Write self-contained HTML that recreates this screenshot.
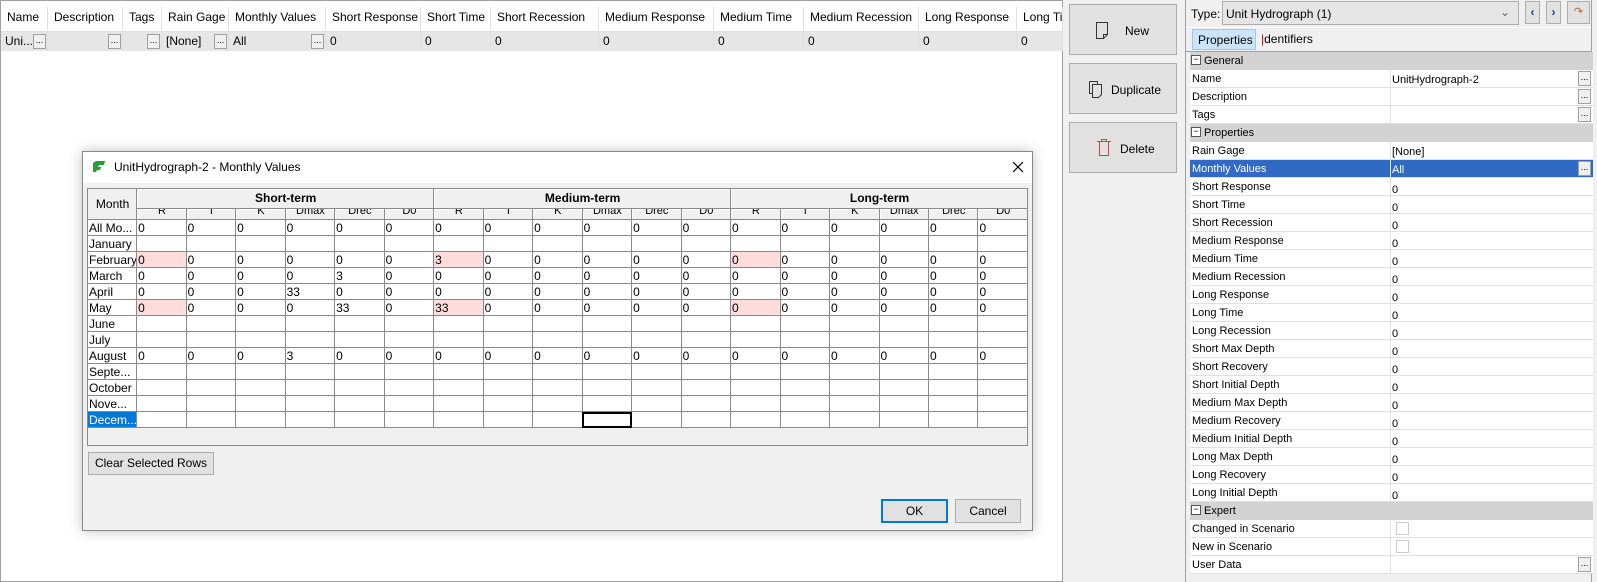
<!DOCTYPE html>
<html><head><meta charset="utf-8">
<style>
*{box-sizing:border-box;margin:0;padding:0}
body{width:1597px;height:582px;overflow:hidden;background:#f0f0f0;font-family:"Liberation Sans",sans-serif;font-size:12px;color:#000;position:relative}
.abs{position:absolute}
.lg{left:0;top:0;width:1063px;height:582px;background:#fff;border:1px solid #a0a0a0}
.lg .c{position:absolute;white-space:nowrap;overflow:hidden;padding-left:6px;line-height:20px}
.eb{position:absolute;width:13px;height:15px;border:1px solid #a0a0a0;background:#f0f0f0;font-size:9px;line-height:11px;text-align:center}
.btn{position:absolute;background:#e1e1e1;border:1px solid #adadad}
.mb{left:1069px;width:108px;font-size:12px}
.mb span{position:absolute;top:19px}
.pg .r{position:absolute;left:1190px;width:403px;height:18px;border-bottom:1px solid #e0e0e0;background:#fff;font-size:11px}
.pg .l{position:absolute;left:2px;top:3px}
.pg .v{position:absolute;left:202px;top:4px}
.pg .vl{position:absolute;left:200px;top:0;width:1px;height:18px;background:#e0e0e0}
.pg .h{background:#d3d3d3;border-bottom:none}
.mv td{border:1px solid #8a8a8a;height:16px;padding:0 0 0 1px;font-size:12px;line-height:14px;white-space:nowrap;overflow:hidden}
</style></head><body>

<div class="abs lg">
  <div class="abs" style="left:0;top:30px;width:1061px;height:20px;background:#e6e6e6"></div>
  <div id="lgh"></div>
</div>

<div class="btn mb" style="top:4px;height:51px">
 <svg class="abs" style="left:25px;top:17px" width="14" height="17"><path d="M1.5 .5h11v12l-4 4h-7z M12.5 12.5h-4v4" fill="none" stroke="#333"/></svg><span style="left:55px">New</span></div>
<div class="btn mb" style="top:63px;height:51px">
 <svg class="abs" style="left:18px;top:17px" width="16" height="18"><path d="M1.5 .5h8v3 M1.5 .5v12h3" fill="none" stroke="#333"/><path d="M4.5 3.5h9v10l-3 3h-6z" fill="none" stroke="#333"/></svg><span style="left:41px">Duplicate</span></div>
<div class="btn mb" style="top:122px;height:51px">
 <svg class="abs" style="left:26px;top:15px" width="16" height="19"><path d="M1 3.5h14 M5.5 3.5v-2h5v2 M3.5 3.5v14h9v-14" fill="none" stroke="#d0404a"/></svg><span style="left:50px">Delete</span></div>

<div class="abs" style="left:1185px;top:0;width:1px;height:582px;background:#a0a0a0"></div>
<div class="abs" style="left:1591px;top:0;width:1px;height:582px;background:#a0a0a0"></div>
<div class="abs" style="left:1191px;top:7px">Type:</div>
<div class="abs" style="left:1222px;top:1px;width:297px;height:24px;background:#e5e5e5;border:1px solid #adadad;padding:5px 0 0 3px;font-size:12px">Unit Hydrograph (1)<span class="abs" style="right:8px;top:3px;color:#666">&#8964;</span></div>
<div class="btn" style="left:1525px;top:1px;width:15px;height:23px;text-align:center;line-height:21px;color:#1a3a8a;font-weight:bold">&#8249;</div>
<div class="btn" style="left:1546px;top:1px;width:15px;height:23px;text-align:center;line-height:21px;color:#1a3a8a;font-weight:bold">&#8250;</div>
<div class="btn" style="left:1567px;top:1px;width:23px;height:23px;text-align:center;line-height:21px;color:#c06020;font-size:11px">&#8631;</div>
<div class="abs" style="left:1186px;top:27px;width:405px;height:1px;background:#fff"></div>
<div class="abs" style="left:1192px;top:29px;width:64px;height:21px;background:#cce4f7;border:1px solid #99c9ef;padding:3px 0 0 5px">Properties</div>
<div class="abs" style="left:1261px;top:32px"><span style="color:#c00">|</span>dentifiers</div>
<div class="abs" style="left:1186px;top:51px;width:406px;height:1px;background:#a0a0a0"></div>
<div class="pg" id="pg"></div>

<div class="abs" style="left:82px;top:151px;width:951px;height:380px;background:#f0f0f0;border:1px solid #888;box-shadow:0 0 12px rgba(0,0,0,.25)">
  <div class="abs" style="left:0;top:0;width:949px;height:31px;background:#fff"></div>
  <svg class="abs" style="left:9px;top:8px" width="14" height="12"><path d="M1 3l3-2h9l-1 4h-5l-1 2h3l-1 3h-3l-1 2h-3z" fill="#2a9a3a"/></svg>
  <div class="abs" style="left:31px;top:8px;font-size:12px">UnitHydrograph-2 - Monthly Values</div>
  <svg class="abs" style="left:929px;top:9px" width="12" height="12"><path d="M1 1l10 10M11 1l-10 10" stroke="#000" stroke-width="1.2"/></svg>
  <div class="abs" style="left:4px;top:36px;width:941px;height:258px;border:1px solid #8a8a8a;background:#f0f0f0"></div>
  <div id="mvw" class="abs" style="left:4px;top:36px"></div>
  <div class="btn" style="left:5px;top:300px;width:126px;height:23px;text-align:center;line-height:21px">Clear Selected Rows</div>
  <div class="btn" style="left:798px;top:347px;width:67px;height:24px;border:2px solid #0078d7;text-align:center;line-height:20px">OK</div>
  <div class="btn" style="left:872px;top:347px;width:66px;height:24px;text-align:center;line-height:22px">Cancel</div>
</div>

<script>
var cols=[["Name",0,47],["Description",47,122],["Tags",122,161],["Rain Gage",161,228],["Monthly Values",228,325],["Short Response",325,420],["Short Time",420,490],["Short Recession",490,598],["Medium Response",598,713],["Medium Time",713,803],["Medium Recession",803,918],["Long Response",918,1016],["Long Ti",1016,1062]];
var vals=["Uni...","","","[None]","All","0","0","0","0","0","0","0","0"];
var h="";
cols.forEach(function(c,i){
 h+='<div class="c" style="left:'+c[1]+'px;top:6px;width:'+(c[2]-c[1])+'px">'+c[0]+'</div>';
 h+='<div class="abs" style="left:'+(c[2]-1)+'px;top:6px;width:1px;height:44px;background:#e0e0e0"></div>';
 h+='<div class="c" style="left:'+c[1]+'px;top:30px;width:'+(c[2]-c[1])+'px;padding-left:4px">'+vals[i]+'</div>';
 if(i<5) h+='<div class="eb" style="left:'+(c[2]-15)+'px;top:33px">...</div>';
});
h+='<div class="abs" style="left:0;top:30px;width:1062px;height:1px;background:#e0e0e0"></div>';
document.getElementById('lgh').innerHTML=h;
var rows=[["General",1],["Name","UnitHydrograph-2",2],["Description","",2],["Tags","",2],["Properties",1],["Rain Gage","[None]"],["Monthly Values","All",3],["Short Response","0"],["Short Time","0"],["Short Recession","0"],["Medium Response","0"],["Medium Time","0"],["Medium Recession","0"],["Long Response","0"],["Long Time","0"],["Long Recession","0"],["Short Max Depth","0"],["Short Recovery","0"],["Short Initial Depth","0"],["Medium Max Depth","0"],["Medium Recovery","0"],["Medium Initial Depth","0"],["Long Max Depth","0"],["Long Recovery","0"],["Long Initial Depth","0"],["Expert",1],["Changed in Scenario","",4],["New in Scenario","",4],["User Data","",2]];
var p="";
rows.forEach(function(r,i){
 var t=52+i*18;
 if(r[1]===1){p+='<div class="r h" style="top:'+t+'px"><span class="abs" style="left:1px;top:3px;width:10px;height:10px;border:1px solid #555;background:#fff;font-size:9px;line-height:7px;text-align:center">&minus;</span><span class="l" style="left:14px">'+r[0]+'</span></div>';return;}
 var sel=r[2]===3;
 p+='<div class="r" style="top:'+t+'px;'+(sel?'background:#316ac5;color:#fff':'')+'"><span class="l">'+r[0]+'</span><span class="vl"></span><span class="v"'+(r[1]=="0"?' style="top:6px"':'')+'>'+r[1]+'</span>';
 if(r[2]==2||r[2]==3)p+='<span class="eb" style="left:388px;top:1px;color:#000">...</span>';
 if(r[2]==4)p+='<span class="abs" style="left:206px;top:2px;width:13px;height:13px;border:1px solid #ccc;background:#fff"></span>';
 p+='</div>';
});
document.getElementById('pg').innerHTML=p;
var W=[49]; for(var k=0;k<18;k++)W.push(49.3);
var t='<table class="mv" style="border-collapse:collapse;table-layout:fixed;width:941px;background:#fff"><colgroup>';
W.forEach(function(w){t+='<col style="width:'+w+'px">'});
t+='</colgroup><tr><td rowspan="2" style="background:#f0f0f0;text-align:center;height:31px;border-color:#8a8a8a">Month</td>';
["Short-term","Medium-term","Long-term"].forEach(function(s){t+='<td colspan="6" style="background:#f0f0f0;text-align:center;font-weight:bold;height:19px;border:1px solid #8a8a8a;box-shadow:inset 1px 1px #fff">'+s+'</td>'});
t+='</tr><tr>';
for(var g=0;g<3;g++)["R","I","K","Dmax","Drec","D0"].forEach(function(s){t+='<td style="background:#f0f0f0;text-align:center;height:11px;font-size:11px;line-height:11px;overflow:hidden;vertical-align:top;box-shadow:inset 1px 1px #fff"><div style="margin-top:-3px">'+s+'</div></td>'});
t+='</tr>';
var M=["All Mo...","January","February","March","April","May","June","July","August","Septe...","October","Nove...","Decem..."];
var Z=["0","0","0","0","0","0"],E=null;
var data=[[Z,Z,Z],E,[["0p","0","0","0","0","0"],["3p","0","0","0","0","0"],["0p","0","0","0","0","0"]],[["0","0","0","0","3","0"],Z,Z],[["0","0","0","33","0","0"],Z,Z],[["0p","0","0","0","33","0"],["33p","0","0","0","0","0"],["0p","0","0","0","0","0"]],E,E,[["0","0","0","3","0","0"],Z,Z],E,E,E,E];
M.forEach(function(m,i){
 t+='<tr><td style="'+(i==12?'background:#0078d7;color:#fff':'')+'">'+m+'</td>';
 for(var g=0;g<3;g++)for(var c=0;c<6;c++){
  var v=data[i]?data[i][g][c]:"";var pk=v.indexOf("p")>0;v=v.replace("p","");
  var st=pk?'background:#ffdcdc':'';
  if(i==12&&g==1&&c==3)st='outline:2px solid #000;outline-offset:-2px';
  t+='<td style="'+st+'">'+v+'</td>';
 }
 t+='</tr>';
});
t+='</table>';
document.getElementById('mvw').innerHTML=t;
</script>
</body></html>
